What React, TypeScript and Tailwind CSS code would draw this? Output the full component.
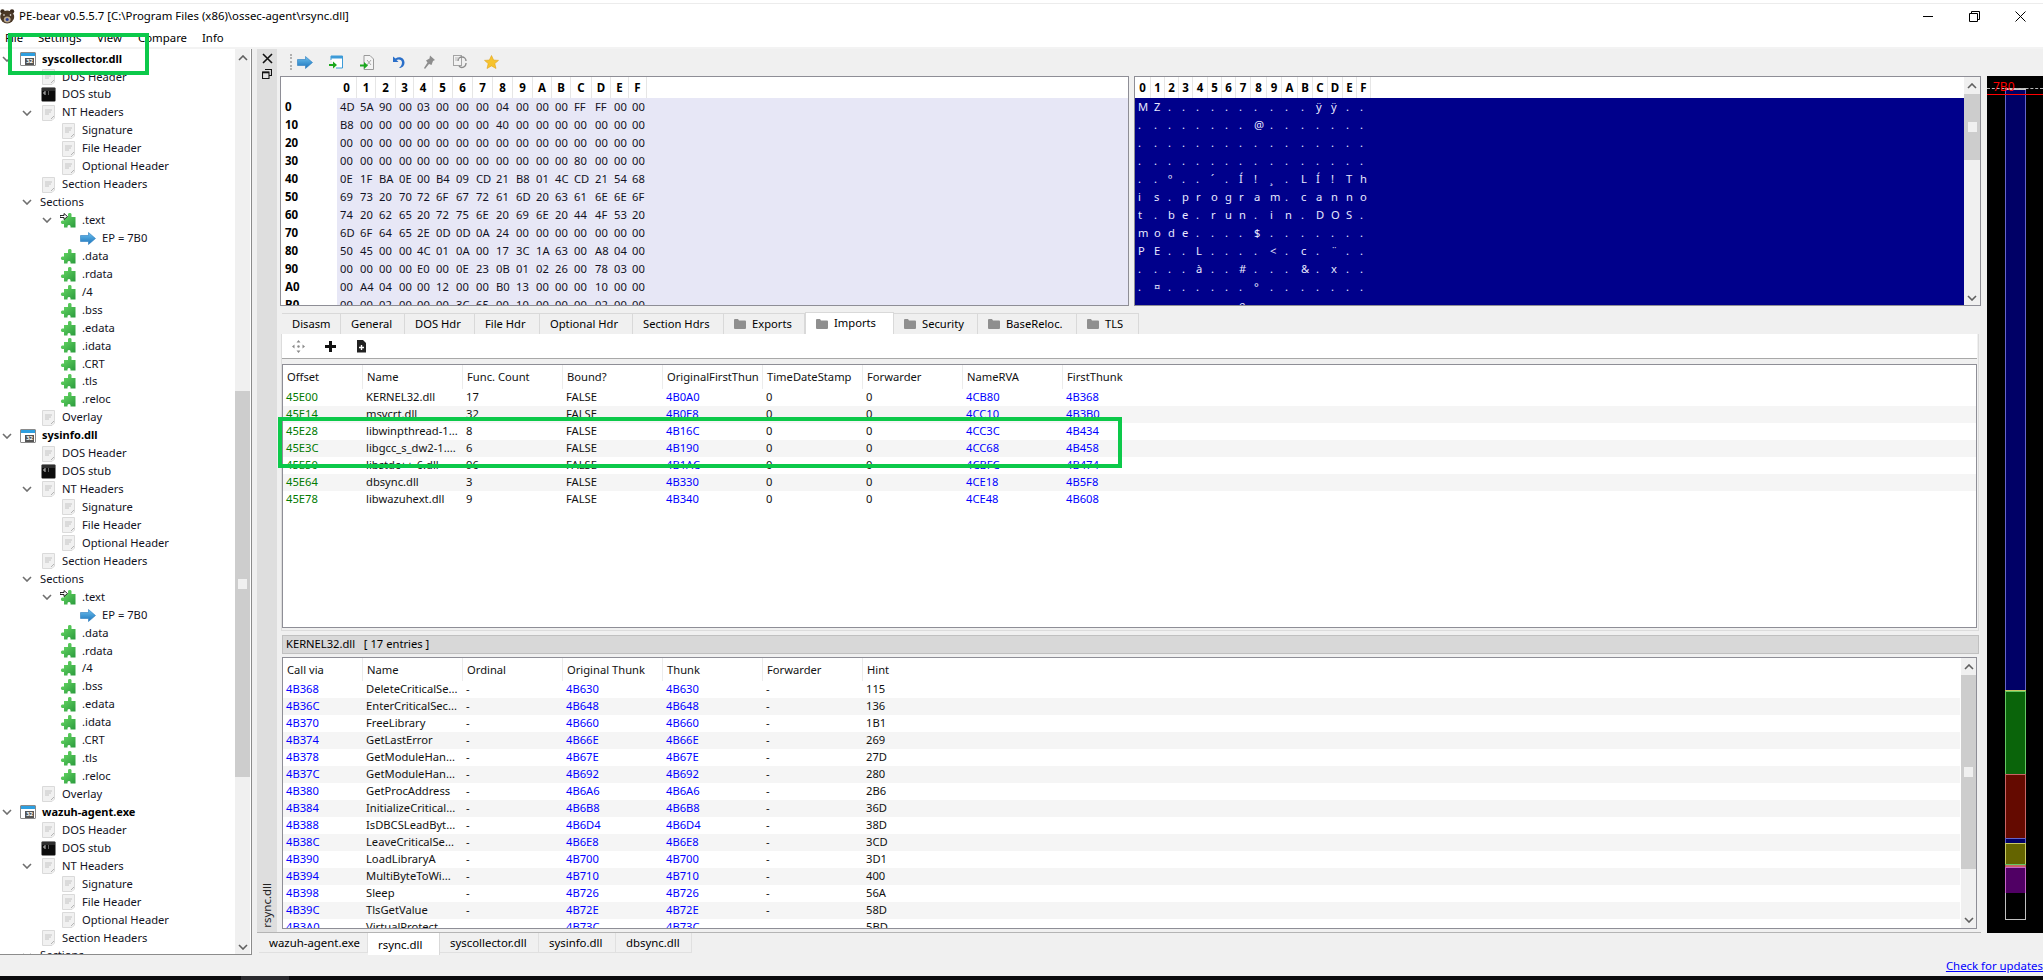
import { ReactNode } from "react";

type Kind = "doc" | "stub" | "puzzle" | "text" | "ep" | "none" | "root";

interface TreeRow {
  label: string;
  level: number;
  kind: Kind;
  open?: boolean;
}

const peRows = (name: string): TreeRow[] => [
  { label: name, level: 0, kind: "root", open: true },
  { label: "DOS Header", level: 1, kind: "doc" },
  { label: "DOS stub", level: 1, kind: "stub" },
  { label: "NT Headers", level: 1, kind: "doc", open: true },
  { label: "Signature", level: 2, kind: "doc" },
  { label: "File Header", level: 2, kind: "doc" },
  { label: "Optional Header", level: 2, kind: "doc" },
  { label: "Section Headers", level: 1, kind: "doc" },
  { label: "Sections", level: 1, kind: "none", open: true },
  { label: ".text", level: 2, kind: "text", open: true },
  { label: "EP = 7B0", level: 3, kind: "ep" },
  { label: ".data", level: 2, kind: "puzzle" },
  { label: ".rdata", level: 2, kind: "puzzle" },
  { label: "/4", level: 2, kind: "puzzle" },
  { label: ".bss", level: 2, kind: "puzzle" },
  { label: ".edata", level: 2, kind: "puzzle" },
  { label: ".idata", level: 2, kind: "puzzle" },
  { label: ".CRT", level: 2, kind: "puzzle" },
  { label: ".tls", level: 2, kind: "puzzle" },
  { label: ".reloc", level: 2, kind: "puzzle" },
  { label: "Overlay", level: 1, kind: "doc" },
];

const treeRows = [...peRows("syscollector.dll"), ...peRows("sysinfo.dll"), ...peRows("wazuh-agent.exe")];

const indent = ["pl-0", "pl-[20px]", "pl-[40px]", "pl-[60px]"];

const hexRows = [
  ["0", "4D 5A 90 00 03 00 00 00 04 00 00 00 FF FF 00 00", "M Z . . . . . . . . . . ÿ ÿ . ."],
  ["10", "B8 00 00 00 00 00 00 00 40 00 00 00 00 00 00 00", ". . . . . . . . @ . . . . . . ."],
  ["20", "00 00 00 00 00 00 00 00 00 00 00 00 00 00 00 00", ". . . . . . . . . . . . . . . ."],
  ["30", "00 00 00 00 00 00 00 00 00 00 00 00 80 00 00 00", ". . . . . . . . . . . . . . . ."],
  ["40", "0E 1F BA 0E 00 B4 09 CD 21 B8 01 4C CD 21 54 68", ". . º . . ´ . Í ! ¸ . L Í ! T h"],
  ["50", "69 73 20 70 72 6F 67 72 61 6D 20 63 61 6E 6E 6F", "i s . p r o g r a m . c a n n o"],
  ["60", "74 20 62 65 20 72 75 6E 20 69 6E 20 44 4F 53 20", "t . b e . r u n . i n . D O S ."],
  ["70", "6D 6F 64 65 2E 0D 0D 0A 24 00 00 00 00 00 00 00", "m o d e . . . . $ . . . . . . ."],
  ["80", "50 45 00 00 4C 01 0A 00 17 3C 1A 63 00 A8 04 00", "P E . . L . . . . < . c . ¨ . ."],
  ["90", "00 00 00 00 E0 00 0E 23 0B 01 02 26 00 78 03 00", ". . . . à . . # . . . & . x . ."],
  ["A0", "00 A4 04 00 00 12 00 00 B0 13 00 00 00 10 00 00", ". ¤ . . . . . . ° . . . . . . ."],
  ["B0", "00 00 02 00 00 00 3C 65 00 10 00 00 00 02 00 00", ". . . . . . . e . . . . . . . ."],
];

const hexHead = "0 1 2 3 4 5 6 7 8 9 A B C D E F".split(" ");

const tabs = [
  { label: "Disasm", w: "w-[59px]" },
  { label: "General", w: "w-[64px]" },
  { label: "DOS Hdr", w: "w-[70px]" },
  { label: "File Hdr", w: "w-[65px]" },
  { label: "Optional Hdr", w: "w-[93px]" },
  { label: "Section Hdrs", w: "w-[91px]" },
  { label: "Exports", w: "w-[81px]", folder: true },
  { label: "Imports", w: "w-[89px]", folder: true, active: true },
  { label: "Security", w: "w-[84px]", folder: true },
  { label: "BaseReloc.", w: "w-[99px]", folder: true },
  { label: "TLS", w: "w-[62px]", folder: true },
];

const imports = [
  ["45E00", "KERNEL32.dll", "17", "FALSE", "4B0A0", "0", "0", "4CB80", "4B368"],
  ["45E14", "msvcrt.dll", "32", "FALSE", "4B0E8", "0", "0", "4CC10", "4B3B0"],
  ["45E28", "libwinpthread-1...", "8", "FALSE", "4B16C", "0", "0", "4CC3C", "4B434"],
  ["45E3C", "libgcc_s_dw2-1....", "6", "FALSE", "4B190", "0", "0", "4CC68", "4B458"],
  ["45E50", "libstdc++-6.dll", "96", "FALSE", "4B1AC", "0", "0", "4CBFC", "4B474"],
  ["45E64", "dbsync.dll", "3", "FALSE", "4B330", "0", "0", "4CE18", "4B5F8"],
  ["45E78", "libwazuhext.dll", "9", "FALSE", "4B340", "0", "0", "4CE48", "4B608"],
];

const importHead = ["Offset", "Name", "Func. Count", "Bound?", "OriginalFirstThun", "TimeDateStamp", "Forwarder", "NameRVA", "FirstThunk"];

const entries = [
  ["4B368", "DeleteCriticalSe...", "4B630", "115"],
  ["4B36C", "EnterCriticalSec...", "4B648", "136"],
  ["4B370", "FreeLibrary", "4B660", "1B1"],
  ["4B374", "GetLastError", "4B66E", "269"],
  ["4B378", "GetModuleHan...", "4B67E", "27D"],
  ["4B37C", "GetModuleHan...", "4B692", "280"],
  ["4B380", "GetProcAddress", "4B6A6", "2B6"],
  ["4B384", "InitializeCritical...", "4B6B8", "36D"],
  ["4B388", "IsDBCSLeadByt...", "4B6D4", "38D"],
  ["4B38C", "LeaveCriticalSe...", "4B6E8", "3CD"],
  ["4B390", "LoadLibraryA", "4B700", "3D1"],
  ["4B394", "MultiByteToWi...", "4B710", "400"],
  ["4B398", "Sleep", "4B726", "56A"],
  ["4B39C", "TlsGetValue", "4B72E", "58D"],
  ["4B3A0", "VirtualProtect", "4B73C", "5BD"],
];

const entryHead = ["Call via", "Name", "Ordinal", "Original Thunk", "Thunk", "Forwarder", "Hint"];

const fileTabs = [
  { label: "wazuh-agent.exe", w: "w-[109px]" },
  { label: "rsync.dll", w: "w-[72px]", active: true },
  { label: "syscollector.dll", w: "w-[99px]" },
  { label: "sysinfo.dll", w: "w-[77px]" },
  { label: "dbsync.dll", w: "w-[76px]" },
];

function Chevron({ up, className }: { up?: boolean; className?: string }) {
  return (
    <svg width="10" height="6" viewBox="0 0 10 6" className={className}>
      <path d={up ? "M1 5 L5 1 L9 5" : "M1 1 L5 5 L9 1"} fill="none" stroke="currentColor" strokeWidth="1.6" />
    </svg>
  );
}

function DocIcon() {
  return (
    <svg width="15" height="16" viewBox="0 0 15 16">
      <path d="M1.5 .5 H13.5 V13 L11 15.5 H1.5 Z" fill="#f1f1f1" stroke="#dadada" />
      <path d="M4 5 H11 M4 7 H10 M4 9 H8" stroke="#c4c4c4" strokeWidth="1" />
      <path d="M10 14 L13 11" stroke="#b5b5b5" />
    </svg>
  );
}

function StubIcon() {
  return (
    <svg width="15" height="15" viewBox="0 0 15 15">
      <rect width="14" height="14" x=".5" y=".5" rx="1" fill="#0c0c0c" />
      <rect x="1" y="1" width="13" height="3" fill="#2e2e2e" />
      <path d="M3 5 H5 M3 5 V7 H5 M7 5 H7.9 M7 7 H7.9" stroke="#c8c8c8" strokeWidth="1" />
    </svg>
  );
}

function PuzzleIcon({ marked }: { marked?: boolean }) {
  return (
    <svg width="16" height="15" viewBox="0 0 16 15">
      <defs>
        <linearGradient id="pz" x1="0" y1="0" x2="1" y2="1">
          <stop offset="0" stopColor="#6fe06a" />
          <stop offset="1" stopColor="#2a9a3c" />
        </linearGradient>
      </defs>
      <path
        d="M8 1 a2 2 0 0 1 3.5 0 V4 H15.5 V14.5 H10.5 V13 a1.6 1.6 0 0 0 -3 0 V14.5 H4 V11 H2 a2 2 0 0 1 0 -3.6 H4 V4 H8 Z"
        fill="url(#pz)"
      />
      {marked && <path d="M0 2.5 H4 V.5 L7.5 3.5 L4 6.5 V4.5 H0 Z" fill="#fff" stroke="#111" strokeWidth=".9" />}
    </svg>
  );
}

function BlueArrow({ w = 16, h = 13 }: { w?: number; h?: number }) {
  return (
    <svg width={w} height={h} viewBox="0 0 16 13">
      <defs>
        <linearGradient id="ba" x1="0" y1="0" x2="0" y2="1">
          <stop offset="0" stopColor="#6cc0ee" />
          <stop offset="1" stopColor="#1b73bb" />
        </linearGradient>
      </defs>
      <path d="M.5 3.5 H8.5 V.5 L15.5 6.5 L8.5 12.5 V9.5 H.5 Z" fill="url(#ba)" stroke="#2a7cc0" strokeWidth=".6" />
    </svg>
  );
}

function RootIcon() {
  return (
    <div className="w-[16px] h-[14px] border border-[#8a8a8a] rounded-[1px] bg-white flex flex-col">
      <div className="h-[3px] bg-[#2e9fe0]" />
      <div className="flex-1 flex justify-end items-end pr-[1px]">
        <span className="bg-[#555] text-white text-[6px] leading-[7px] px-[1px] font-bold">32</span>
      </div>
    </div>
  );
}

function TreeIcon({ kind }: { kind: Kind }) {
  if (kind === "doc") return <DocIcon />;
  if (kind === "stub") return <StubIcon />;
  if (kind === "puzzle") return <PuzzleIcon />;
  if (kind === "text") return <PuzzleIcon marked />;
  if (kind === "ep") return <BlueArrow />;
  if (kind === "root") return <RootIcon />;
  return null;
}

function Tree() {
  return (
    <div className="w-[252px] h-[906px] bg-white border-r border-b border-[#8c8c8c] flex">
      <div className="flex-1 overflow-hidden pt-[1px]">
        {treeRows.map((r, i) => (
          <div key={i} className={`h-[17.95px] flex items-center whitespace-nowrap ${indent[r.level]}`}>
            <div className="w-[13px] flex justify-center text-[#6f6f6f]">{r.open && <Chevron />}</div>
            <div className="w-[7px]" />
            {r.kind !== "none" && (
              <div className="w-[16px] mr-[6px] flex justify-center shrink-0">
                <TreeIcon kind={r.kind} />
              </div>
            )}
            <span className={r.kind === "root" ? "font-bold text-black text-[11px]" : "text-[#111122]"}>{r.label}</span>
          </div>
        ))}
      </div>
      <div className="w-[15px] flex flex-col bg-[#f0f0f0] mr-[1px]">
        <div className="h-[342px] flex justify-center pt-[6px] text-[#606060]">
          <Chevron up />
        </div>
        <div className="h-[386px] bg-[#cdcdcd] flex items-center justify-center">
          <div className="w-[9px] h-[10px] bg-[#f0f0f0]" />
        </div>
        <div className="flex-1 flex justify-center items-end pb-[4px] text-[#606060]">
          <Chevron />
        </div>
      </div>
    </div>
  );
}

function ToolIcon({ children }: { children: ReactNode }) {
  return <div className="w-[16px] h-[16px] flex items-center justify-center">{children}</div>;
}

function Toolbar() {
  return (
    <div className="h-[27px] flex items-center pl-[10px] pb-[1px]">
      <div className="w-[2px] h-[16px] border-l-2 border-dotted border-[#b0b0b0] mr-[5px]" />
      <div className="flex gap-[15px]">
        <ToolIcon>
          <BlueArrow />
        </ToolIcon>
        <ToolIcon>
          <svg width="14" height="14" viewBox="0 0 14 14">
            <path d="M2 5 V1 H13.5 V13 H7" fill="#fff" stroke="#3d9bd8" />
            <rect x="2" y="1" width="11.5" height="2.5" fill="#3d9bd8" />
            <path d="M0 9 H4 V6.5 L8 10 L4 13.5 V11 H0 Z" fill="#1ba81e" />
          </svg>
        </ToolIcon>
        <ToolIcon>
          <svg width="14" height="15" viewBox="0 0 14 15">
            <path d="M4 .5 H10 L13.5 4 V14.5 H4 Z" fill="#f4f4f4" stroke="#9a9a9a" />
            <path d="M7 5 L11 10 M11 5 L7 10" stroke="#a8a8a8" />
            <path d="M0 9.5 H4 V7 L8 10.5 L4 14 V11.5 H0 Z" fill="#1ba81e" />
          </svg>
        </ToolIcon>
        <ToolIcon>
          <svg width="14" height="14" viewBox="0 0 14 14">
            <path d="M2 1.5 V7 H7.5 L5.5 5 C8 3.5 11 5 11 7.5 C11 10 9.5 12 8 13 C11.5 13 13.5 10.5 13.5 7.5 C13.5 3 8.5 0.5 4.5 3.5 Z" fill="#2a6fc9" />
          </svg>
        </ToolIcon>
        <ToolIcon>
          <svg width="13" height="15" viewBox="0 0 13 15">
            <path d="M7 .5 L12 5 L10 6 L8.5 10 L6 9 L2 14 L1 13 L4.5 7.5 L3 5.5 L6.5 3.5 Z" fill="#8e8e8e" />
          </svg>
        </ToolIcon>
        <ToolIcon>
          <svg width="14" height="14" viewBox="0 0 14 14">
            <rect x=".5" y=".5" width="8" height="10" fill="#f2f2f2" stroke="#a4a4a4" />
            <path d="M5 6 A4 4 0 0 1 13 6 M13 8 A4 4 0 0 1 6 11" fill="none" stroke="#8c8c8c" strokeWidth="1.4" />
            <path d="M2 3 H6 M2 5 H5" stroke="#b8b8b8" />
          </svg>
        </ToolIcon>
        <ToolIcon>
          <svg width="15" height="14" viewBox="0 0 15 14">
            <path d="M7.5 .5 L9.6 5 L14.5 5.4 L10.8 8.6 L12 13.5 L7.5 10.9 L3 13.5 L4.2 8.6 L.5 5.4 L5.4 5 Z" fill="#f6c32e" stroke="#e2a51c" strokeWidth=".6" />
          </svg>
        </ToolIcon>
      </div>
    </div>
  );
}

function HexPane() {
  return (
    <div className="w-[849px] h-[230px] border border-[#8e8e96] overflow-hidden bg-white shrink-0">
      <div className="grid grid-cols-[56px_20px_19px_20px_18px_19px_20px_20px_20px_20px_20px_19px_19px_21px_19px_18px_18px] h-[21px] items-center font-bold text-[11.5px]">
        <div />
        {hexHead.map((h) => (
          <div key={h} className="h-full flex items-center justify-center border-r border-[#e6e6e6]">
            {h}
          </div>
        ))}
      </div>
      <div className="bg-[#e7e7f6] h-[208px]">
        {hexRows.map(([addr, bytes]) => (
          <div key={addr} className="grid grid-cols-[56px_20px_19px_20px_18px_19px_20px_20px_20px_20px_20px_19px_19px_21px_19px_18px_18px] h-[18px] items-center">
            <div className="bg-white h-full flex items-center pl-[4px] font-bold text-[11.5px]">{addr}</div>
            {bytes.split(" ").map((b, i) => (
              <div key={i} className="pl-[3px] text-[#111122]">
                {b}
              </div>
            ))}
          </div>
        ))}
      </div>
    </div>
  );
}

function AsciiPane() {
  return (
    <div className="flex-1 h-[230px] border border-[#8e8e96] overflow-hidden flex bg-white">
      <div className="flex-1 overflow-hidden">
        <div className="grid grid-cols-[16px_14px_14px_14px_15px_14px_14px_15px_16px_15px_16px_15px_15px_15px_14px_14px] h-[21px] items-center font-bold text-[11.5px]">
          {hexHead.map((h) => (
            <div key={h} className="h-full flex items-center justify-center border-r border-[#e6e6e6]">
              {h}
            </div>
          ))}
        </div>
        <div className="bg-[#00008b] h-[208px] text-[#e8e8ff]">
          {hexRows.map(([addr, , chars]) => (
            <div key={addr} className="grid grid-cols-[16px_14px_14px_14px_15px_14px_14px_15px_16px_15px_16px_15px_15px_15px_14px_14px] h-[18px] items-center">
              {chars.split(" ").map((c, i) => (
                <div key={i} className="pl-[3px]">
                  {c}
                </div>
              ))}
            </div>
          ))}
        </div>
      </div>
      <div className="w-[16px] flex flex-col bg-[#f0f0f0]">
        <div className="h-[17px] flex justify-center items-center text-[#606060]">
          <Chevron up />
        </div>
        <div className="h-[66px] bg-[#cdcdcd] flex items-center justify-center">
          <div className="w-[9px] h-[10px] bg-[#f0f0f0]" />
        </div>
        <div className="flex-1 flex justify-center items-end pb-[4px] text-[#606060]">
          <Chevron />
        </div>
      </div>
    </div>
  );
}

function FolderIcon() {
  return (
    <svg width="12" height="10" viewBox="0 0 12 10" className="mr-[6px] shrink-0">
      <path d="M0 1 Q0 0 1 0 H4 L5 1.5 H11 Q12 1.5 12 2.5 V9 Q12 10 11 10 H1 Q0 10 0 9 Z" fill="#8f8f8f" />
    </svg>
  );
}

function TabStrip() {
  return (
    <div className="h-[22px] flex items-end ml-[2px] mt-[6px]">
      {tabs.map((t) => (
        <div
          key={t.label}
          className={`${t.w} flex items-center pl-[10px] border-r border-[#d9d9d9] ${
            t.active ? "h-[22px] bg-white border-t border-l" : "h-[21px] bg-[#f0f0f0] border-t border-[#d9d9d9]"
          }`}
        >
          {t.folder && <FolderIcon />}
          <span>{t.label}</span>
        </div>
      ))}
    </div>
  );
}

function SubToolbar() {
  return (
    <div className="h-[25px] bg-white border-b border-[#a8a8a8] flex items-center pl-[10px] gap-[16px]">
      <svg width="13" height="13" viewBox="0 0 13 13" className="mr-[3px]">
        <path d="M6.5 0 L8.5 2.5 H4.5 Z M6.5 13 L4.5 10.5 H8.5 Z M0 6.5 L2.5 4.5 V8.5 Z M13 6.5 L10.5 8.5 V4.5 Z" fill="#8a8a8a" />
        <circle cx="6.5" cy="6.5" r="1.2" fill="#8a8a8a" />
      </svg>
      <svg width="13" height="13" viewBox="0 0 13 13">
        <path d="M5 1 H8 V5 H12 V8 H8 V12 H5 V8 H1 V5 H5 Z" fill="#111" />
      </svg>
      <svg width="11" height="13" viewBox="0 0 11 13" className="ml-[3px]">
        <path d="M1 0 H7 L10 3 V12.5 H1 Z" fill="#222" />
        <path d="M5.5 5 V10 M3 7.5 H8" stroke="#fff" strokeWidth="1.4" />
      </svg>
    </div>
  );
}

function ImportsTable() {
  return (
    <div className="h-[264px] mt-[5px] bg-white border border-[#8e8e96] overflow-hidden whitespace-nowrap">
      <div className="grid grid-cols-[80px_100px_100px_100px_100px_100px_100px_100px_100px] h-[24px]">
        {importHead.map((h, i) => (
          <div
            key={h}
            className={`flex items-center pl-[4px] pt-[1px] overflow-hidden text-[#111] ${i < importHead.length - 1 ? "border-r border-[#ececec]" : ""}`}
          >
            {h}
          </div>
        ))}
      </div>
      {imports.map((r, i) => (
        <div key={r[0]} className={`grid grid-cols-[80px_100px_100px_100px_100px_100px_100px_100px_100px] h-[17px] items-center ${i % 2 ? "bg-[#f5f5f5]" : ""}`}>
          {r.map((c, j) => (
            <div
              key={j}
              className={`pl-[3px] overflow-hidden ${j === 0 ? "text-[#007a00]" : j === 4 || j === 7 || j === 8 ? "text-[#0000ff]" : "text-[#111]"}`}
            >
              {c}
            </div>
          ))}
        </div>
      ))}
    </div>
  );
}

function EntriesTable() {
  return (
    <div className="h-[272px] mt-[3px] bg-white border border-[#8e8e96] overflow-hidden whitespace-nowrap flex">
      <div className="flex-1 overflow-hidden">
        <div className="grid grid-cols-[80px_100px_100px_100px_100px_100px_100px] h-[23px]">
          {entryHead.map((h, i) => (
            <div key={h} className={`flex items-center pl-[4px] pt-[1px] text-[#111] ${i < entryHead.length - 1 ? "border-r border-[#ececec]" : ""}`}>
              {h}
            </div>
          ))}
        </div>
        {entries.map((r, i) => (
          <div key={r[0]} className={`grid grid-cols-[80px_100px_100px_100px_100px_100px_100px] h-[17px] items-center ${i % 2 ? "bg-[#f5f5f5]" : ""}`}>
            <div className="pl-[3px] text-[#0000ff]">{r[0]}</div>
            <div className="pl-[3px] text-[#111] overflow-hidden">{r[1]}</div>
            <div className="pl-[3px] text-[#111]">-</div>
            <div className="pl-[3px] text-[#0000ff]">{r[2]}</div>
            <div className="pl-[3px] text-[#0000ff]">{r[2]}</div>
            <div className="pl-[3px] text-[#111]">-</div>
            <div className="pl-[3px] text-[#111]">{r[3]}</div>
          </div>
        ))}
      </div>
      <div className="w-[15px] flex flex-col bg-[#f0f0f0] ml-[1px]">
        <div className="h-[17px] flex justify-center items-center text-[#606060]">
          <Chevron up />
        </div>
        <div className="h-[194px] bg-[#cdcdcd] flex items-center justify-center">
          <div className="w-[9px] h-[10px] bg-[#f0f0f0]" />
        </div>
        <div className="flex-1 flex justify-center items-end pb-[5px] text-[#606060]">
          <Chevron />
        </div>
      </div>
    </div>
  );
}

function Strip() {
  return (
    <div className="w-[20px] bg-[#dedede] flex flex-col items-center pt-[4px]">
      <svg width="11" height="11" viewBox="0 0 11 11">
        <path d="M1 1 L10 10 M10 1 L1 10" stroke="#111" strokeWidth="1.6" />
      </svg>
      <svg width="10" height="10" viewBox="0 0 10 10" className="mt-[5px]">
        <path d="M3 .5 H9.5 V6.5 H7.5 M.5 3 H7 V9.5 H.5 Z" fill="none" stroke="#111" strokeWidth="1.1" />
        <path d="M.5 3.5 H7" stroke="#111" strokeWidth="1.6" />
      </svg>
      <div className="flex-1" />
      <span className="[writing-mode:vertical-rl] rotate-180 text-[11.5px] mb-[4px] text-[#222]">rsync.dll</span>
    </div>
  );
}

function FileTabs() {
  return (
    <div className="h-[22px] flex ml-[2px]">
      {fileTabs.map((t) => (
        <div
          key={t.label}
          className={`${t.w} flex items-center pl-[10px] whitespace-nowrap text-[11.4px] border-r border-[#d9d9d9] ${
            t.active ? "h-[22px] bg-white pt-[1px]" : "h-[20px] border-b border-[#e0e0e0] bg-[#f0f0f0]"
          }`}
        >
          {t.label}
        </div>
      ))}
    </div>
  );
}

function MapPane() {
  return (
    <div className="w-[56px] h-[857px] mt-[27px] ml-[6px] bg-black relative">
      <div className="ml-[18px] w-[21px] pt-[12px] flex flex-col">
        <div className="h-[2px] bg-[#c8c8c8]" />
        <div className="h-[600px] bg-[#000066] border-x border-[#6464c8]" />
        <div className="h-[1px] bg-[#c8c864]" />
        <div className="h-[83px] bg-[#0a640a] border-x border-t border-[#64c864]" />
        <div className="h-[64px] bg-[#640a00] border-x border-t border-[#c86464]" />
        <div className="h-[5px] bg-[#000066] border-x border-t border-[#6464c8]" />
        <div className="h-[21px] bg-[#646400] border-x border-t border-[#c8c864]" />
        <div className="h-[1px] bg-[#64c864]" />
        <div className="h-[2px] bg-[#c86464]" />
        <div className="h-[26px] bg-[#500064] border-x border-t border-[#c864c8]" />
        <div className="h-[27px] bg-black border-x border-b border-[#c0c0c0]" />
      </div>
      <div className="absolute left-0 right-0 top-[12px] border-t border-dashed border-[#b8b8b8]" />
      <div className="absolute left-0 right-0 top-[18px] h-[1px] bg-[#ff0000]" />
      <span className="absolute left-[6px] top-[3px] text-[12px] leading-[16px] text-[#ff0000]">7B0</span>
    </div>
  );
}

export default function App() {
  return (
    <div className="w-[2043px] h-[980px] overflow-hidden relative bg-[#f0f0f0] text-black text-[11.2px] font-['Noto_Sans','Open_Sans',sans-serif] flex flex-col">
      <div className="h-[47px] bg-white flex flex-col">
        <div className="h-[3px]" />
        <div className="h-[1px] bg-[#ececec]" />
        <div className="h-[24px] flex items-center">
          <svg width="15" height="15" viewBox="0 0 15 15" className="mr-[4px]">
            <circle cx="2.5" cy="2.5" r="2.2" fill="#3a2a1c" />
            <circle cx="12" cy="2.5" r="2.2" fill="#3a2a1c" />
            <ellipse cx="7.2" cy="8" rx="7" ry="6.5" fill="#4a3826" />
            <ellipse cx="7.2" cy="10.5" rx="3.4" ry="3" fill="#b7a78e" />
            <circle cx="7.2" cy="10.5" r="1.5" fill="#2a3f9a" />
            <circle cx="4" cy="6" r=".8" fill="#fff" />
            <circle cx="10.5" cy="6" r=".8" fill="#fff" />
          </svg>
          <span className="text-[11.4px] flex-1">PE-bear v0.5.5.7 [C:\Program Files (x86)\ossec-agent\rsync.dll]</span>
          <div className="flex">
            <div className="w-[46px] flex justify-center items-center">
              <div className="w-[10px] h-[1px] bg-black" />
            </div>
            <div className="w-[46px] flex justify-center">
              <svg width="11" height="11" viewBox="0 0 11 11">
                <path d="M.5 2.5 H8.5 V10.5 H.5 Z M2.5 2.5 V.5 H10.5 V8.5 H8.5" fill="none" stroke="#000" />
              </svg>
            </div>
            <div className="w-[46px] flex justify-center">
              <svg width="11" height="11" viewBox="0 0 11 11">
                <path d="M.5 .5 L10.5 10.5 M10.5 .5 L.5 10.5" stroke="#000" />
              </svg>
            </div>
          </div>
        </div>
        <div className="h-[19px] flex items-center text-[11.4px]">
          <span className="ml-[5px] w-[33px]">File</span>
          <span className="w-[59px]">Settings</span>
          <span className="w-[41px]">View</span>
          <span className="w-[64px]">Compare</span>
          <span>Info</span>
        </div>
      </div>
      <div className="h-[2px] bg-[#f3f3f3]" />

      <div className="h-[906px] flex">
        <Tree />
        <div className="w-[1724px] ml-[5px] shrink-0 flex flex-col">
          <div className="h-[884px] flex">
            <Strip />
            <div className="flex-1 flex flex-col pl-[3px]">
              <Toolbar />
              <div className="flex gap-[5px]">
                <HexPane />
                <AsciiPane />
              </div>
              <TabStrip />
              <div className="ml-[1px] mr-[2px] h-[297px] bg-[#f0f0f0] border-x border-b border-[#dcdcdc] pr-[1px]">
                <SubToolbar />
                <ImportsTable />
              </div>
              <div className="ml-[2px] mr-[2px] mt-[4px] h-[19px] bg-[#d8d8d8] border border-[#c0c0c0] flex items-center pl-[3px]">
                KERNEL32.dll&nbsp;&nbsp;&nbsp;[ 17 entries ]
              </div>
              <div className="ml-[2px] mr-[4px]">
                <EntriesTable />
              </div>
            </div>
          </div>
          <div className="h-[1px] bg-[#b4b4b4]" />
          <FileTabs />
        </div>
        <MapPane />
      </div>

      <div className="h-[21px] flex items-center justify-end">
        <a className="text-[11.4px] text-[#0000ff] underline whitespace-nowrap">Check for updates</a>
      </div>
      <div className="h-[4px] bg-[#0b0b0e] flex">
        <div className="w-[241px]" />
        <div className="w-[48px] bg-[#2a2a2e]" />
      </div>

      {/* annotation boxes */}
      <div className="absolute left-[8px] top-[33px] w-[141px] h-[42px] border-4 border-[#0cc94a]" />
      <div className="absolute left-[278px] top-[417px] w-[844px] h-[51px] border-4 border-[#0cc94a]" />
    </div>
  );
}
